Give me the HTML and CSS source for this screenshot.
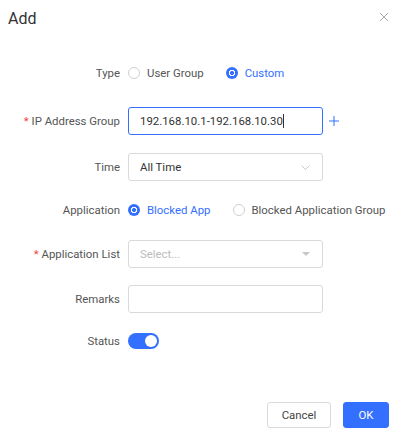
FILE: index.html
```html
<!DOCTYPE html>
<html>
<head>
<meta charset="utf-8">
<link rel="stylesheet" href="styles.css">
</head>
<body>
<div class="dialog">
  <div class="header">
    <span class="title">Add</span>
    <svg class="close" width="10" height="10" viewBox="0 0 10 10"><path d="M1 1L9 9M9 1L1 9" stroke="#aaa" stroke-width="1" fill="none"/></svg>
  </div>
  <div class="form">
    <div class="row r-type">
      <div class="label">Type</div>
      <div class="control radios">
        <label class="radio-item"><span class="radio"></span><span>User Group</span></label>
        <label class="radio-item checked"><span class="radio on"></span><span>Custom</span></label>
      </div>
    </div>
    <div class="row r-ip">
      <div class="label"><span class="req">*</span> IP Address Group</div>
      <div class="control">
        <div class="input focus">192.168.10.1-192.168.10.30<span class="caret"></span></div>
        <svg class="plus" width="10" height="10" viewBox="0 0 10 10"><path d="M5 0V10M0 5H10" stroke="#3370ff" stroke-width="1" fill="none"/></svg>
      </div>
    </div>
    <div class="row r-time">
      <div class="label">Time</div>
      <div class="control">
        <div class="input select">All Time
          <svg class="chev" width="9" height="5" viewBox="0 0 9 5"><path d="M0.5 0.5L4.5 4.5L8.5 0.5" stroke="#bbb" stroke-width="0.8" fill="none"/></svg>
        </div>
      </div>
    </div>
    <div class="row r-app">
      <div class="label">Application</div>
      <div class="control radios">
        <label class="radio-item checked"><span class="radio on"></span><span>Blocked App</span></label>
        <label class="radio-item"><span class="radio"></span><span>Blocked Application Group</span></label>
      </div>
    </div>
    <div class="row r-list">
      <div class="label"><span class="req">*</span> Application List</div>
      <div class="control">
        <div class="input select placeholder">Select...
          <svg class="tri" width="8" height="4" viewBox="0 0 8 4"><path d="M0 0H8L4 4Z" fill="#c8c8c8"/></svg>
        </div>
      </div>
    </div>
    <div class="row r-remarks">
      <div class="label">Remarks</div>
      <div class="control">
        <div class="input"></div>
      </div>
    </div>
    <div class="row r-status">
      <div class="label">Status</div>
      <div class="control">
        <span class="toggle"><span class="knob"></span></span>
      </div>
    </div>
  </div>
  <div class="footer">
    <button class="btn">Cancel</button>
    <button class="btn primary">OK</button>
  </div>
</div>
</body>
</html>
```
FILE: styles.css
```css
* { box-sizing: border-box; }
html, body { margin: 0; padding: 0; background: #fff; }
body {
  font-family: Roboto, "Liberation Sans", Arial, sans-serif;
  font-size: 11.4px;
  color: #333;
  width: 398px;
  height: 440px;
  overflow: hidden;
}
.dialog { display: flex; flex-direction: column; height: 440px; }
.header {
  display: flex;
  justify-content: space-between;
  align-items: center;
  padding: 8px 9px 0 8px;
  height: 28px;
}
.title { font-size: 16px; color: #333; }
.close { margin-top: -2px; }
.form {
  display: flex;
  flex-direction: column;
  gap: 16px;
  padding-top: 31px;
}
.row {
  display: grid;
  grid-template-columns: 120px 1fr;
  column-gap: 8px;
  align-items: center;
  min-height: 28px;
}
.r-ip { margin-top: 4px; }
.r-time { margin-top: 2px; }
.r-app { margin-top: -1px; }
.r-remarks { margin-top: 1px; }
.r-status { margin-top: -2px; }
.label { text-align: right; color: #555; white-space: nowrap; }
.req { color: #f0443c; }
.control { display: flex; align-items: center; }
.radio-item { display: flex; align-items: center; color: #555; margin-right: 22px; white-space: nowrap; }
.radio-item.checked { color: #3370ff; }
.radio {
  width: 12px; height: 12px;
  border-radius: 50%;
  border: 1px solid #d0d0d0;
  margin: 0 7px 0 0;
  background: #fff;
}
.radio.on {
  border: none;
  background: radial-gradient(circle, #3370ff 0 1.8px, #fff 2.3px 3px, #3370ff 3.5px);
}
.input {
  width: 195px;
  height: 28px;
  border: 1px solid #d9d9d9;
  border-radius: 3px;
  padding: 0 11px;
  display: flex;
  align-items: center;
  color: #333;
}
.input.focus { border-color: #3370ff; }
.caret { display: inline-block; width: 1px; height: 14px; background: #333; }
.plus { margin-left: 6px; }
.select { justify-content: space-between; padding-right: 12px; }
.placeholder { color: #bbb; }
.toggle {
  width: 31px; height: 16px;
  border-radius: 8px;
  background: #3370ff;
  position: relative;
  display: inline-block;
}
.knob {
  position: absolute;
  right: 2px; top: 2px;
  width: 12px; height: 12px;
  border-radius: 50%;
  background: #fff;
}
.footer {
  margin-top: auto;
  display: flex;
  justify-content: flex-end;
  gap: 12px;
  padding: 0 9px 12px 0;
}
.btn {
  font-family: Roboto, "Liberation Sans", Arial, sans-serif;
  font-size: 11.4px;
  height: 26px;
  border-radius: 3px;
  border: 1px solid #d9d9d9;
  background: #fff;
  color: #444;
  padding: 0;
  width: 64px;
}
.btn.primary { background: #3370ff; border-color: #3370ff; color: #fff; width: 46px; }
```
